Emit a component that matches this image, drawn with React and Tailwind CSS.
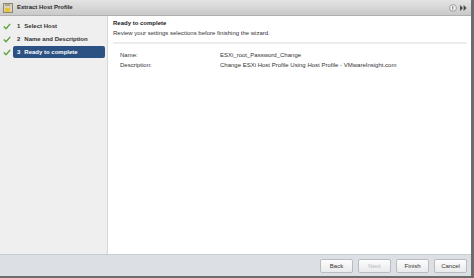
import React from 'react';

const steps = [
  { n: 1, label: 'Select Host' },
  { n: 2, label: 'Name and Description' },
  { n: 3, label: 'Ready to complete', active: true },
];

function Check() {
  return (
    <svg width="8" height="7" viewBox="0 0 8 7" className="shrink-0">
      <path d="M0.8 3.6 L3 5.8 L7.2 0.9" fill="none" stroke="#5aa33c" strokeWidth="1.4" />
    </svg>
  );
}

function Btn({ children, disabled }) {
  return (
    <button
      className={`w-[33px] h-[14px] border border-[#b9bcc1] rounded-[2px] bg-gradient-to-b from-[#fdfdfd] to-[#e9eaec] text-[6px] leading-none ${
        disabled ? 'text-[#b5b8bc]' : 'text-[#333]'
      }`}
    >
      {children}
    </button>
  );
}

export default function App() {
  return (
    <div
      className="w-[474px] h-[278px] flex flex-col bg-white text-[#333] overflow-hidden border-r-[3px] border-b-[2px] border-[#6c6c6c]"
      style={{ fontFamily: '"Liberation Sans", Arial, sans-serif' }}
    >
      {/* Title bar */}
      <div className="h-[16px] shrink-0 flex items-center px-[3px] bg-gradient-to-b from-[#e4e4e4] to-[#c9c9c9] border-b border-[#b0b0b0]">
        <svg width="10" height="10" viewBox="0 0 10 10" className="shrink-0">
          <rect x="0.5" y="0.5" width="9" height="9" fill="#d9d2b4" stroke="#8a8a70" />
          <rect x="2" y="5" width="5" height="4" fill="#e8c23a" />
          <path d="M2 2 H7" stroke="#666" strokeWidth="0.8" />
        </svg>
        <span className="ml-[4px] text-[6px] font-bold text-[#2a2a2a]">Extract Host Profile</span>
        <div className="ml-auto flex items-center gap-[3px] pr-[1px]">
          <svg width="8" height="8" viewBox="0 0 8 8">
            <circle cx="4" cy="4" r="3.4" fill="#f2f2f2" stroke="#8b8b8b" strokeWidth="0.8" />
            <path d="M3.8 2.2 v2.6" stroke="#555" strokeWidth="0.9" />
            <circle cx="3.8" cy="5.8" r="0.5" fill="#555" />
          </svg>
          <svg width="7" height="6" viewBox="0 0 7 6">
            <path d="M0 0 L3 3 L0 6 Z M3.6 0 L6.6 3 L3.6 6 Z" fill="#4a4a4a" />
          </svg>
        </div>
      </div>

      <div className="flex flex-1 min-h-0">
        {/* Sidebar */}
        <div className="w-[108px] shrink-0 bg-[#efefef] border-r border-[#d8d8d8] pt-[4px] pl-[3px] pr-[2px] flex flex-col gap-[1px]">
          {steps.map((s) => (
            <div key={s.n} className="flex items-center gap-[2px] h-[12px]">
              <Check />
              <div
                className={`flex-1 h-[12px] flex items-center pl-[4px] text-[6px] font-bold rounded-[2px] ${
                  s.active ? 'bg-[#2b5283] text-white' : 'text-[#333]'
                }`}
              >
                <span className="mr-[4px]">{s.n}</span>
                {s.label}
              </div>
            </div>
          ))}
        </div>

        {/* Content */}
        <div className="flex-1 flex flex-col pt-[3px] pl-[5px] pr-[4px]">
          <div className="text-[6px] font-bold text-[#222] leading-[9px]">Ready to complete</div>
          <div className="text-[6px] text-[#333] leading-[9px] mt-[1px]">
            Review your settings selections before finishing the wizard.
          </div>
          <div className="h-[2px] bg-[#ececec] mt-[4px]" />
          <div className="mt-[7px] pl-[7px] grid grid-cols-[100px_1fr] gap-y-[1px] text-[6px] text-[#333] leading-[9px]">
            <div>Name:</div>
            <div>ESXi_root_Password_Change</div>
            <div>Description:</div>
            <div>Change ESXi Host Profile Using Host Profile - VMwareInsight.com</div>
          </div>
        </div>
      </div>

      {/* Footer */}
      <div className="h-[22px] shrink-0 bg-[#dcdfe4] border-t border-[#c9ccd1] flex items-center justify-end gap-[5px] pr-[4px]">
        <Btn>Back</Btn>
        <Btn disabled>Next</Btn>
        <Btn>Finish</Btn>
        <Btn>Cancel</Btn>
      </div>
    </div>
  );
}
